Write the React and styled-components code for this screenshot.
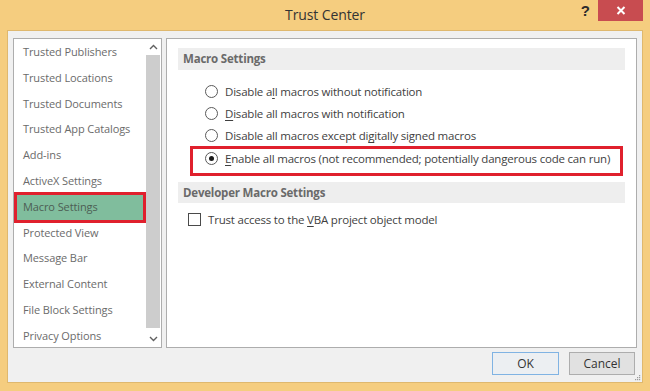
import React from 'react';
import styled, { createGlobalStyle } from 'styled-components';

const Global = createGlobalStyle`
  html, body { margin: 0; padding: 0; }
  body { font-family: "Open Sans", "Noto Sans", sans-serif; }
`;

const Frame = styled.div`
  width: 650px;
  height: 391px;
  background: #f5cd7f;
  display: flex;
  flex-direction: column;
  box-sizing: border-box;
  overflow: hidden;
`;

const TitleBar = styled.div`
  height: 30px;
  display: grid;
  grid-template-columns: 1fr auto 1fr;
  align-items: start;
`;

const Title = styled.div`
  grid-column: 2;
  font-size: 14px;
  color: #333;
  line-height: 30px;
  letter-spacing: -0.1px;
`;

const Controls = styled.div`
  grid-column: 3;
  justify-self: end;
  display: flex;
  align-items: flex-start;
  margin-right: 7px;
`;

const Help = styled.div`
  font-family: "Liberation Sans", sans-serif;
  font-weight: bold;
  font-size: 15px;
  color: #2b2b2b;
  margin: 2px 8px 0 0;
  line-height: 18px;
`;

const Close = styled.div`
  width: 45px;
  height: 21px;
  background: #c84c50;
  display: flex;
  align-items: center;
  justify-content: center;
`;

const Client = styled.div`
  flex: 1;
  margin: 0 7px 8px 7px;
  border: 1px solid #dfb86e;
  background: #f0f0f0;
  display: flex;
  flex-direction: column;
  padding: 7px 5px 0 5px;
  position: relative;
`;

const Main = styled.div`
  height: 310px;
  display: flex;
  gap: 4px;
`;

const Panel = styled.div`
  border: 1px solid #adadad;
  background: #fff;
  box-sizing: border-box;
  height: 100%;
`;

const NavPanel = styled(Panel)`
  width: 149px;
  display: flex;
`;

const NavList = styled.div`
  flex: 1;
  display: flex;
  flex-direction: column;
`;

const NavItem = styled.div`
  height: 25.8px;
  line-height: 25.8px;
  padding-left: 9px;
  font-size: 11px;
  letter-spacing: -0.1px;
  color: ${({ $active }) => ($active ? '#4d5d54' : '#6b6b6b')};
  background: ${({ $active }) => ($active ? '#80bd9d' : 'transparent')};
  position: relative;
  white-space: nowrap;
  &::after {
    content: '';
    display: ${({ $active }) => ($active ? 'block' : 'none')};
    position: absolute;
    top: -2px;
    bottom: -3px;
    left: 0;
    right: -1px;
    border: 3px solid #e0202d;
  }
`;

const Scrollbar = styled.div`
  width: 16px;
  display: flex;
  flex-direction: column;
`;

const ScrollArrow = styled.div`
  height: 16px;
  display: flex;
  align-items: center;
  justify-content: center;
`;

const Track = styled.div`
  flex: 1;
  display: flex;
  flex-direction: column;
`;

const Thumb = styled.div`
  height: 273px;
  margin: 0 1px;
  background: #cdcdcd;
`;

const ContentPanel = styled(Panel)`
  flex: 1;
  padding: 9px 11px 0 11px;
`;

const SectionHeader = styled.div`
  height: ${({ $h }) => $h}px;
  line-height: ${({ $h }) => $h}px;
  background: #eeeeee;
  padding-left: 5px;
  font-size: 11.5px;
  font-weight: bold;
  letter-spacing: -0.2px;
  color: #6a6a6a;
`;

const Options = styled.div`
  margin: ${({ $top }) => $top}px 0 ${({ $bottom }) => $bottom}px 0;
  display: flex;
  flex-direction: column;
`;

const OptionRow = styled.label`
  height: 22.4px;
  display: flex;
  align-items: center;
  gap: ${({ $gap }) => $gap}px;
  padding-left: ${({ $indent }) => $indent}px;
  font-size: 11.5px;
  letter-spacing: -0.2px;
  color: #3f3f3f;
  position: relative;
  white-space: nowrap;
  u { text-decoration-thickness: 1px; text-underline-offset: 2px; }
  &::after {
    content: '';
    display: ${({ $marked }) => ($marked ? 'block' : 'none')};
    position: absolute;
    top: -1px;
    bottom: -6px;
    left: 12px;
    right: 2px;
    border: 3px solid #e0202d;
  }
`;

const Radio = styled.span`
  width: 13px;
  height: 13px;
  box-sizing: border-box;
  border-radius: 50%;
  border: 1px solid #5a5a5a;
  background: #fff;
  display: flex;
  align-items: center;
  justify-content: center;
  flex: none;
  &::before {
    content: '';
    display: ${({ $checked }) => ($checked ? 'block' : 'none')};
    width: 5px;
    height: 5px;
    border-radius: 50%;
    background: #1a1a1a;
  }
`;

const Checkbox = styled.span`
  width: 13px;
  height: 13px;
  box-sizing: border-box;
  border: 1px solid #4a4a4a;
  background: #fff;
  flex: none;
`;

const Footer = styled.div`
  display: flex;
  justify-content: flex-end;
  gap: 10px;
  padding: 4px 2px 0 0;
`;

const Button = styled.button`
  width: ${({ $w }) => $w}px;
  height: 23px;
  box-sizing: border-box;
  font-family: "Open Sans", "Noto Sans", sans-serif;
  font-size: 12px;
  color: #333;
  padding: 0;
  background: ${({ $primary }) => ($primary ? '#eceff2' : '#e1e1e1')};
  border: 1px solid ${({ $primary }) => ($primary ? '#80b3e3' : '#adadad')};
  outline: none;
`;

const Grip = styled.svg`
  position: absolute;
  right: 1px;
  bottom: 1px;
`;

const Chevron = ({ up }) => (
  <svg width="9" height="6" viewBox="0 0 9 6">
    <polyline
      points={up ? '1,5 4.5,1.5 8,5' : '1,1 4.5,4.5 8,1'}
      fill="none"
      stroke="#606060"
      strokeWidth="1.4"
    />
  </svg>
);

const navItems = [
  'Trusted Publishers',
  'Trusted Locations',
  'Trusted Documents',
  'Trusted App Catalogs',
  'Add-ins',
  'ActiveX Settings',
  'Macro Settings',
  'Protected View',
  'Message Bar',
  'External Content',
  'File Block Settings',
  'Privacy Options',
];

const macroOptions = [
  <>Disable a<u>l</u>l macros without notification</>,
  <><u>D</u>isable all macros with notification</>,
  <>Disable all macros except di<u>g</u>itally signed macros</>,
  <><u>E</u>nable all macros (not recommended; potentially dangerous code can run)</>,
];

export default function App() {
  return (
    <Frame>
      <Global />
      <TitleBar>
        <Title>Trust Center</Title>
        <Controls>
          <Help>?</Help>
          <Close>
            <svg width="10" height="9" viewBox="0 0 10 9">
              <path d="M1.5 1 L8.5 8 M8.5 1 L1.5 8" stroke="#fff" strokeWidth="2" />
            </svg>
          </Close>
        </Controls>
      </TitleBar>
      <Client>
        <Main>
          <NavPanel>
            <NavList>
              {navItems.map((item) => (
                <NavItem key={item} $active={item === 'Macro Settings'}>
                  {item}
                </NavItem>
              ))}
            </NavList>
            <Scrollbar>
              <ScrollArrow>
                <Chevron up />
              </ScrollArrow>
              <Track>
                <Thumb />
              </Track>
              <ScrollArrow>
                <Chevron />
              </ScrollArrow>
            </Scrollbar>
          </NavPanel>
          <ContentPanel>
            <SectionHeader $h={22}>Macro Settings</SectionHeader>
            <Options $top={10} $bottom={12}>
              {macroOptions.map((label, i) => (
                <OptionRow key={i} $indent={27} $gap={7} $marked={i === 3}>
                  <Radio $checked={i === 3} />
                  <span>{label}</span>
                </OptionRow>
              ))}
            </Options>
            <SectionHeader $h={21}>Developer Macro Settings</SectionHeader>
            <Options $top={6} $bottom={0}>
              <OptionRow $indent={10} $gap={7}>
                <Checkbox />
                <span>Trust access to the <u>V</u>BA project object model</span>
              </OptionRow>
            </Options>
          </ContentPanel>
        </Main>
        <Footer>
          <Button $w={67} $primary>OK</Button>
          <Button $w={66}>Cancel</Button>
        </Footer>
        <Grip width="7" height="7" viewBox="0 0 7 7">
          {[[5, 1], [3, 3], [5, 3], [1, 5], [3, 5], [5, 5]].map(([x, y]) => (
            <rect key={`${x}-${y}`} x={x} y={y} width="1.2" height="1.2" fill="#9a9a9a" />
          ))}
        </Grip>
      </Client>
    </Frame>
  );
}
